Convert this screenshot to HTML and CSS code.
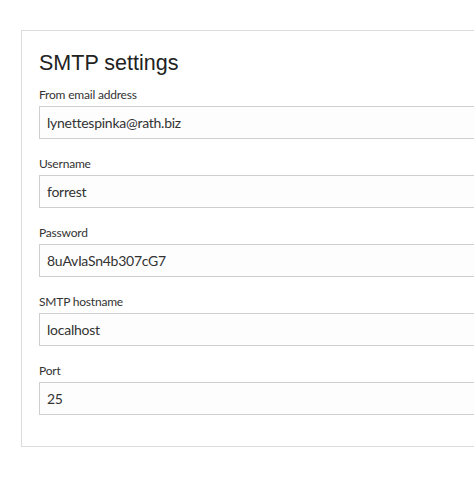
FILE: index.html
```html
<!DOCTYPE html>
<html lang="en">
<head>
<meta charset="utf-8">
<title>SMTP settings</title>
<link rel="stylesheet" href="styles.css">
</head>
<body>
<div class="page">
  <section class="card">
    <h1 class="title">SMTP settings</h1>
    <div class="field">
      <label class="label" for="from">From email address</label>
      <input class="input" id="from" type="text" value="lynettespinka@rath.biz">
    </div>
    <div class="field">
      <label class="label" for="user">Username</label>
      <input class="input" id="user" type="text" value="forrest">
    </div>
    <div class="field">
      <label class="label" for="pass">Password</label>
      <input class="input" id="pass" type="text" value="8uAvIaSn4b307cG7">
    </div>
    <div class="field">
      <label class="label" for="host">SMTP hostname</label>
      <input class="input" id="host" type="text" value="localhost">
    </div>
    <div class="field">
      <label class="label" for="port">Port</label>
      <input class="input" id="port" type="text" value="25">
    </div>
  </section>
</div>
</body>
</html>
```

FILE: styles.css
```css
html, body {
  margin: 0;
  padding: 0;
  background: #ffffff;
  overflow: hidden;
}

.page {
  padding: 30px 0 0 21px;
  width: 700px;
}

.card {
  width: 520px;
  border: 1px solid #dcdcdc;
  padding: 20px 17px 31px 17px;
  font-family: Lato, "Open Sans", sans-serif;
  color: #333;
}

.title {
  margin: 0 0 12px 0;
  font-family: "Liberation Sans", Arial, sans-serif;
  font-weight: normal;
  font-size: 21.5px;
  line-height: 24px;
  color: #222;
}

.field {
  margin-bottom: 17px;
}

.field:last-child {
  margin-bottom: 0;
}

.label {
  display: block;
  font-size: 12px;
  line-height: 16px;
  margin-bottom: 3px;
  letter-spacing: -0.2px;
  color: #333;
}

.input {
  display: block;
  box-sizing: border-box;
  width: 100%;
  height: 33px;
  margin: 0;
  padding: 0 7px;
  border: 1px solid #cfcfcf;
  border-radius: 0;
  background: #fdfdfd;
  font-family: Lato, "Open Sans", sans-serif;
  font-size: 14px;
  letter-spacing: -0.25px;
  color: #333;
  outline: none;
}
```
